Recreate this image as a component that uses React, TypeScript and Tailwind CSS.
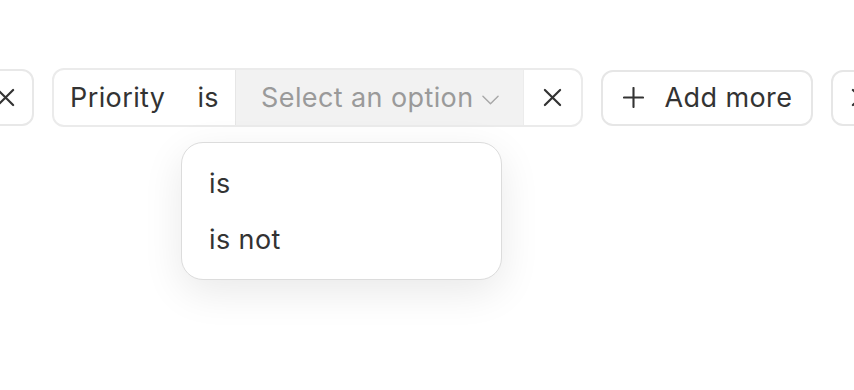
import { useState } from "react"

function XIcon({ className = "" }: { className?: string }) {
  return (
    <svg viewBox="0 0 20 20" className={className} fill="none" stroke="currentColor" strokeWidth={2.3} strokeLinecap="round">
      <path d="M2 2l16 16M18 2L2 18" />
    </svg>
  )
}

export default function App() {
  const [value] = useState<string | null>(null)
  return (
    <div
      className="h-[390px] w-[854px] overflow-hidden bg-white text-[#333]"
      style={{ fontFamily: "Inter, 'Noto Sans', sans-serif" }}
    >
      <div className="flex items-center gap-[18px] pt-[68px] ml-[-24px] whitespace-nowrap text-[27px] tracking-[0.4px]">
        <button className="flex h-[57px] w-[58px] shrink-0 items-center justify-center rounded-[12px] border-2 border-[#e8e8e8]">
          <XIcon className="h-[19px] w-[19px]" />
        </button>

        <div className="relative shrink-0">
          <div className="flex h-[59px] items-stretch overflow-hidden rounded-[12px] border-2 border-[#ebebeb]">
            <div className="flex items-center pl-[16px] pr-[16px] pt-[2px]">Priority</div>
            <div className="flex items-center pl-[16px] pr-[16px] pt-[2px]">is</div>
            <div className="flex items-center gap-[8px] bg-[#f2f2f2] border-l border-[#e6e6e6] pl-[25px] pr-[24px] pt-[2px] text-[#9a9a9a]">
              {value ?? "Select an option"}
              <svg viewBox="0 0 18 10" className="h-[10px] w-[17px] mt-[2px] text-[#a8a8a8]" fill="none" stroke="currentColor" strokeWidth={1.5} strokeLinecap="round" strokeLinejoin="round">
                <path d="M1 1l8 8 8-8" />
              </svg>
            </div>
            <button className="flex w-[58px] items-center justify-center border-l border-[#ececec]">
              <XIcon className="h-[19px] w-[19px]" />
            </button>
          </div>

          <div className="absolute left-[129px] top-[74px] w-[321px] rounded-[22px] border border-[#dcdcdc] bg-white py-[12px] shadow-[0_12px_40px_rgba(0,0,0,0.09)]">
            <div className="flex h-[56px] items-center px-[27px] pt-[2px]">is</div>
            <div className="flex h-[56px] items-center px-[27px] pt-[2px]">is not</div>
          </div>
        </div>

        <button className="flex h-[56px] shrink-0 items-center gap-[21px] rounded-[12px] border-2 border-[#e6e6e6] pl-[20px] pr-[19px]">
          <svg viewBox="0 0 22 22" className="h-[21px] w-[21px]" fill="none" stroke="currentColor" strokeWidth={2.2} strokeLinecap="round">
            <path d="M11 1v20M1 11h20" />
          </svg>
          <span className="pt-[2px]">Add more</span>
        </button>

        <button className="flex h-[56px] w-[58px] shrink-0 items-center justify-center rounded-[12px] border-2 border-[#e6e6e6]">
          <XIcon className="h-[19px] w-[19px]" />
        </button>
      </div>
    </div>
  )
}
